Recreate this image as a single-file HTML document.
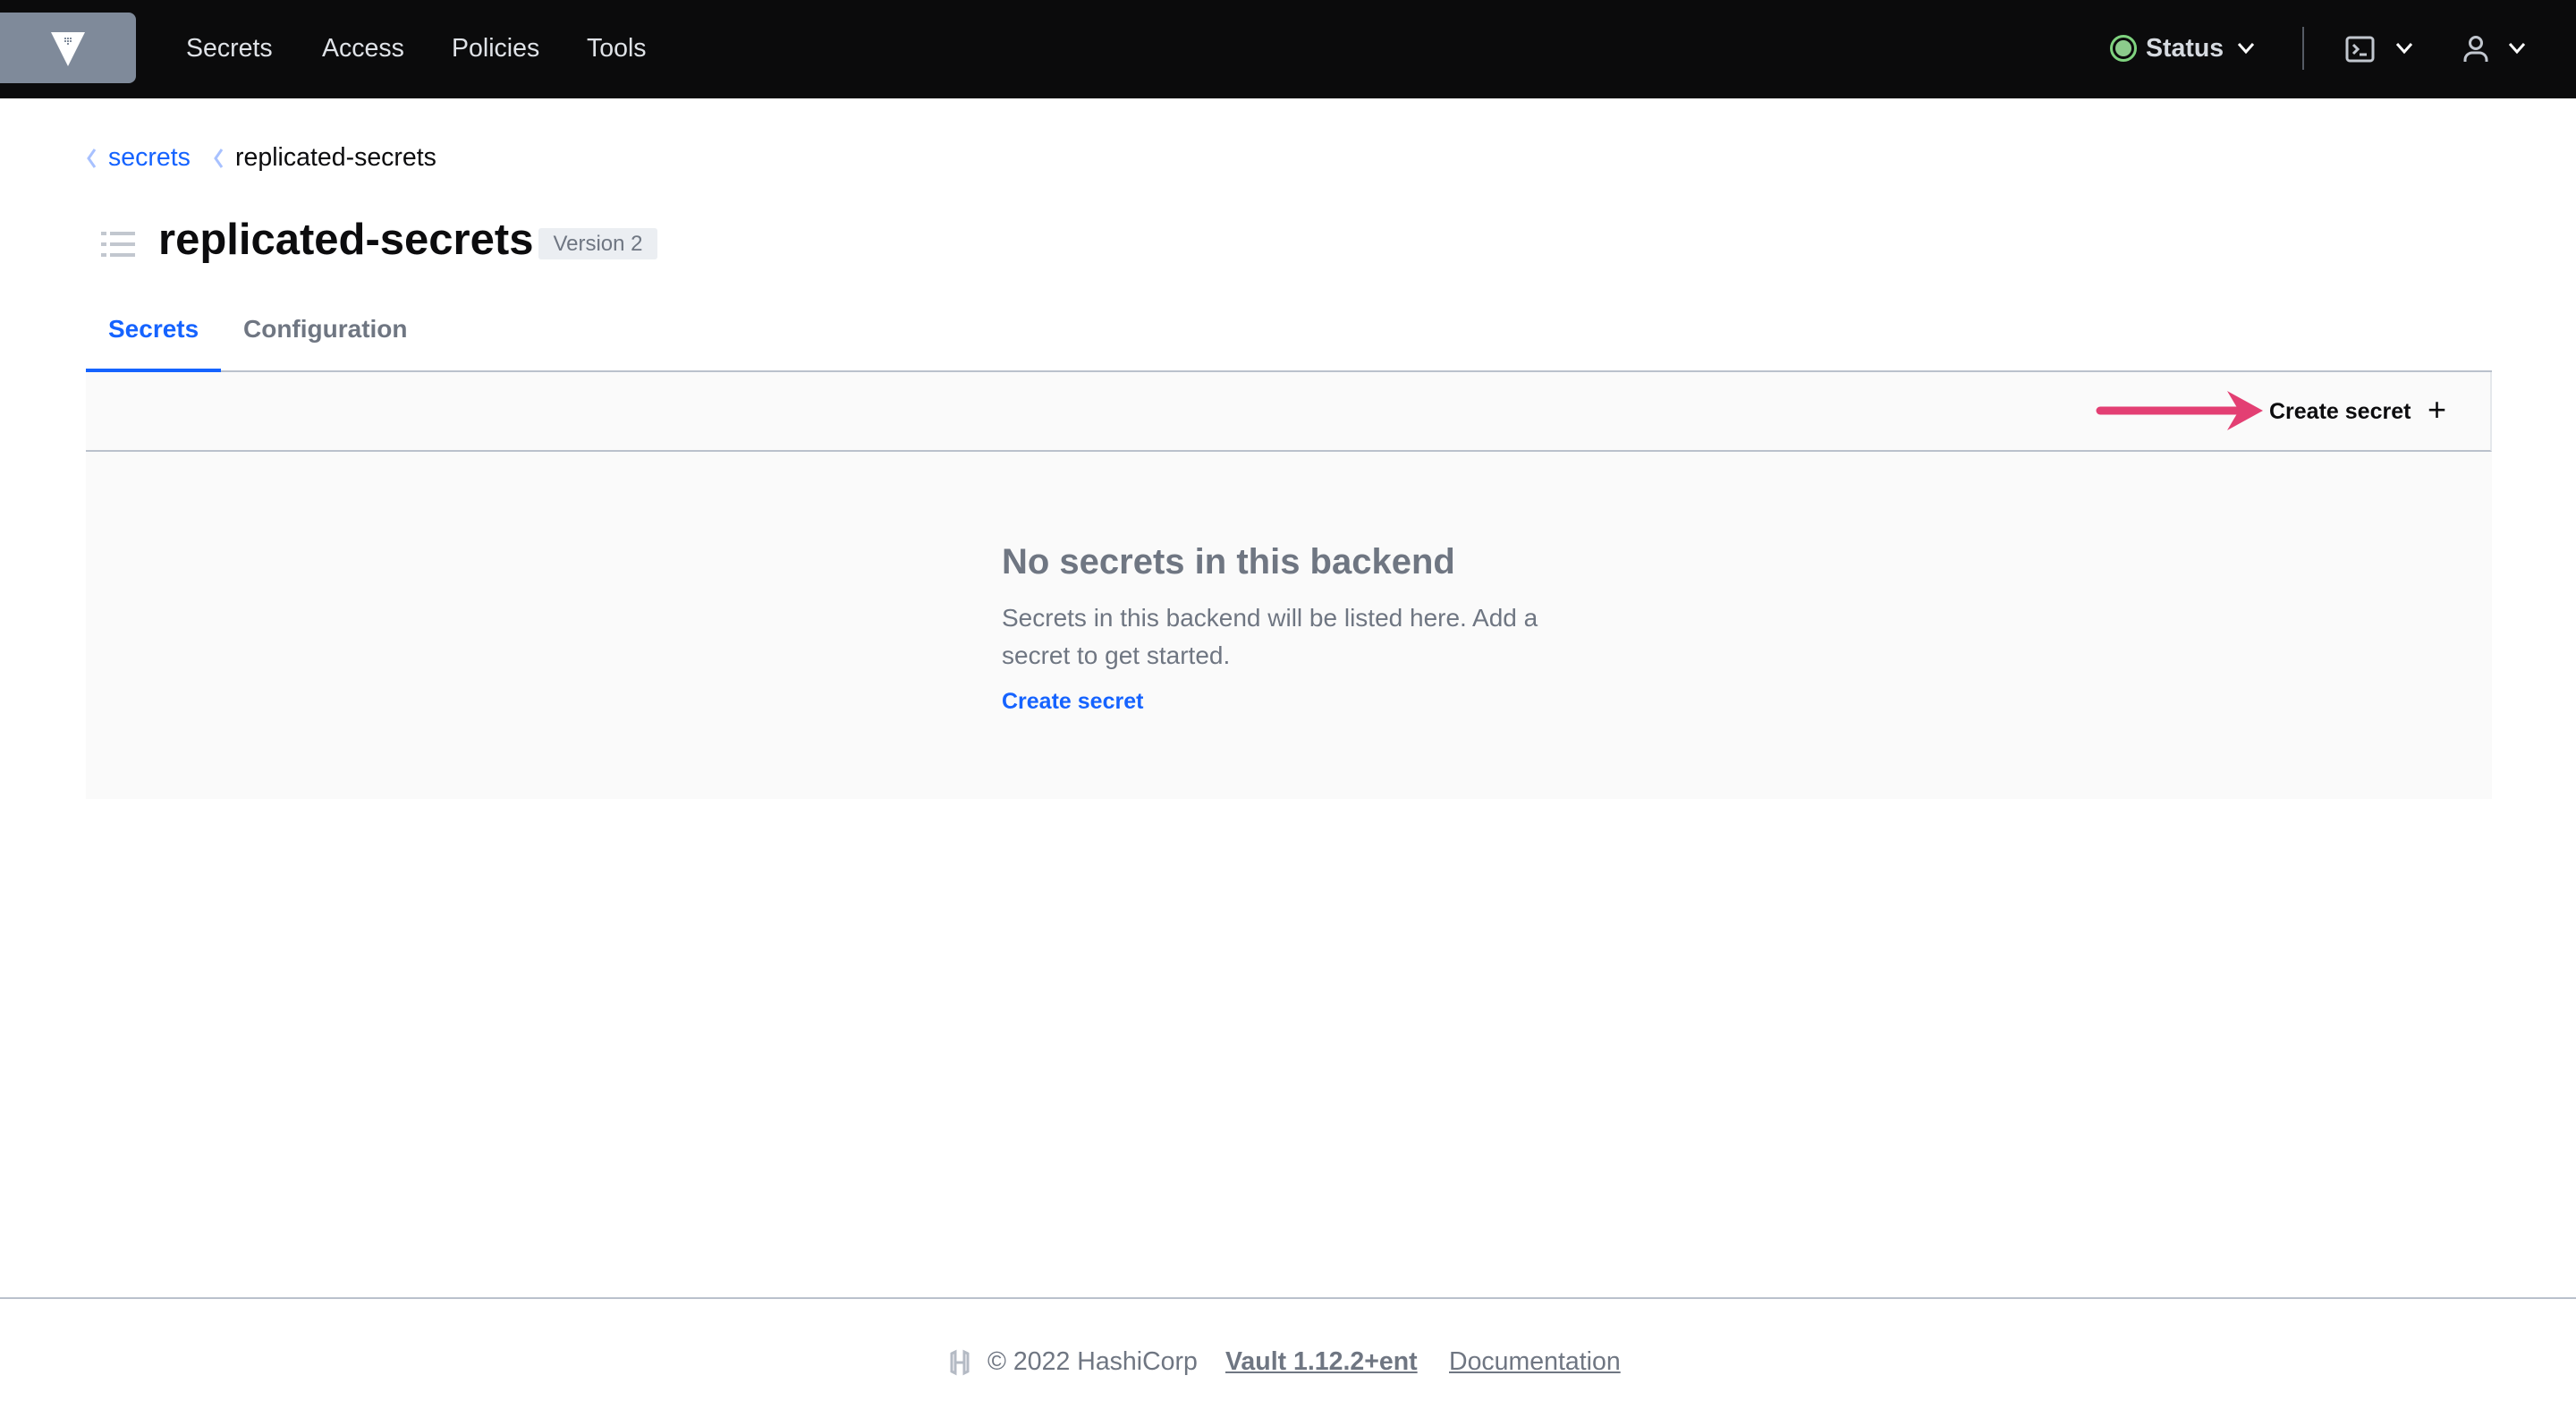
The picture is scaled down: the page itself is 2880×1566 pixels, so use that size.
<!DOCTYPE html>
<html><head><meta charset="utf-8"><style>
*{margin:0;padding:0;box-sizing:border-box}
body{width:2880px;height:1566px;background:#fff;font-family:"Liberation Sans",Arial,sans-serif;position:relative;overflow:hidden}
.a{position:absolute;white-space:nowrap}
.nav{position:absolute;left:0;top:0;width:2880px;height:110px;background:#0b0b0c}
.navt{color:#dfe2e7;font-size:28.5px;top:38px}
</style></head><body>
<div class="nav">
 <div class="a" style="left:0;top:14px;width:152px;height:79px;background:#7f8a9a;border-radius:0 8px 8px 0"></div>
 <svg class="a" style="left:55px;top:34px" width="42" height="42" viewBox="0 0 42 42"><polygon points="2,2 40,2 21,40" fill="#fff"/><g fill="#7f8a9a"><rect x="17" y="8" width="2" height="2"/><rect x="20" y="8" width="2" height="2"/><rect x="23" y="8" width="2" height="2"/><rect x="17" y="11" width="2" height="2"/><rect x="20" y="11" width="2" height="2"/><rect x="23" y="11" width="2" height="2"/><rect x="20" y="14" width="2" height="2"/></g></svg>
 <div class="a navt" style="left:208px">Secrets</div>
 <div class="a navt" style="left:360px">Access</div>
 <div class="a navt" style="left:505px">Policies</div>
 <div class="a navt" style="left:656px">Tools</div>
 <div class="a" style="left:2359px;top:39px;width:30px;height:30px;border-radius:50%;border:3px solid #7fd37f;background:#0b0b0c"><div style="margin:3px;width:18px;height:18px;border-radius:50%;background:#8ccc8c"></div></div>
 <div class="a navt" style="left:2399px;font-weight:bold;color:#d6dae0">Status</div>
 <svg class="a" style="left:2500px;top:46px" width="22" height="16"><polyline points="3,3 11,12 19,3" fill="none" stroke="#fff" stroke-width="3"/></svg>
 <div class="a" style="left:2574px;top:30px;width:2px;height:48px;background:#555b64"></div>
 <svg class="a" style="left:2622px;top:40px" width="34" height="30"><rect x="2" y="2" width="29" height="26" rx="3" fill="none" stroke="#c2c7cf" stroke-width="3"/><polyline points="9,10 14,15 9,20" fill="none" stroke="#c2c7cf" stroke-width="3"/><line x1="16" y1="21" x2="24" y2="21" stroke="#c2c7cf" stroke-width="3"/></svg>
 <svg class="a" style="left:2677px;top:46px" width="22" height="16"><polyline points="3,3 11,12 19,3" fill="none" stroke="#fff" stroke-width="3"/></svg>
 <svg class="a" style="left:2754px;top:39px" width="28" height="32"><circle cx="14" cy="9" r="6.5" fill="none" stroke="#c2c7cf" stroke-width="3"/><path d="M2,30 V28 A8,8 0 0 1 10,20 H18 A8,8 0 0 1 26,28 V30" fill="none" stroke="#c2c7cf" stroke-width="3"/></svg>
 <svg class="a" style="left:2803px;top:46px" width="22" height="16"><polyline points="3,3 11,12 19,3" fill="none" stroke="#fff" stroke-width="3"/></svg>
</div>

<svg class="a" style="left:95px;top:165px" width="14" height="24"><polyline points="11,2 4,12 11,22" fill="none" stroke="#a8c1ff" stroke-width="3"/></svg>
<div class="a" style="left:121px;top:160px;font-size:28.5px;color:#1563ff">secrets</div>
<svg class="a" style="left:237px;top:165px" width="14" height="24"><polyline points="11,2 4,12 11,22" fill="none" stroke="#a8c1ff" stroke-width="3"/></svg>
<div class="a" style="left:263px;top:160px;font-size:28.5px;color:#0c0c0e">replicated-secrets</div>

<svg class="a" style="left:113px;top:258px" width="40" height="30"><g fill="#c2c7cf"><rect x="0" y="1" width="6" height="4"/><rect x="10" y="1" width="28" height="4"/><rect x="0" y="13" width="6" height="4"/><rect x="10" y="13" width="28" height="4"/><rect x="0" y="25" width="6" height="4"/><rect x="10" y="25" width="28" height="4"/></g></svg>
<div class="a" style="left:177px;top:240px;font-size:49px;font-weight:bold;color:#0c0c0e">replicated-secrets</div>
<div class="a" style="left:602px;top:255px;width:133px;height:35px;background:#ebeef2;border-radius:3px;color:#6f7682;font-size:24px;text-align:center;line-height:35px">Version 2</div>

<div class="a" style="left:121px;top:352px;font-size:28px;color:#1563ff;font-weight:bold">Secrets</div>
<div class="a" style="left:272px;top:352px;font-size:28px;color:#6f7682;font-weight:bold">Configuration</div>
<div class="a" style="left:96px;top:414px;width:2690px;height:2px;background:#bac1cc"></div>
<div class="a" style="left:96px;top:412px;width:151px;height:4px;background:#1563ff"></div>

<div class="a" style="left:96px;top:416px;width:2690px;height:89px;background:#fafafa;border-right:2px solid #e5e8ec;border-bottom:2px solid #bac1cc"></div>
<svg class="a" style="left:2340px;top:434px" width="195" height="50"><line x1="8" y1="25" x2="160" y2="25" stroke="#e33f73" stroke-width="9" stroke-linecap="round"/><polygon points="150,3 190,25 150,47 163,25" fill="#e33f73"/></svg>
<div class="a" style="left:2537px;top:446px;font-size:25px;font-weight:bold;color:#0c0c0e">Create secret</div>
<div class="a" style="left:2714px;top:437px;font-size:36px;color:#0c0c0e">+</div>

<div class="a" style="left:96px;top:505px;width:2690px;height:388px;background:#fafafa"></div>
<div class="a" style="left:1120px;top:606px;font-size:40px;font-weight:bold;color:#6f7682">No secrets in this backend</div>
<div class="a" style="left:1120px;top:670px;font-size:28px;color:#6f7682;line-height:42px;white-space:normal;width:660px">Secrets in this backend will be listed here. Add a secret to get started.</div>
<div class="a" style="left:1120px;top:770px;font-size:25px;font-weight:bold;color:#1563ff">Create secret</div>

<div class="a" style="left:0;top:1450px;width:2880px;height:2px;background:#bac1cc"></div>
<svg class="a" style="left:1058px;top:1508px" width="30" height="30"><g fill="none" stroke="#b4bac4" stroke-width="3"><path d="M6,5 L10,3 V27 L6,25 Z"/><path d="M24,5 L20,3 V27 L24,25 Z"/><line x1="10" y1="15" x2="20" y2="15"/></g></svg>
<div class="a" style="left:1104px;top:1506px;font-size:28.5px;color:#6f7682">© 2022 HashiCorp</div>
<div class="a" style="left:1370px;top:1506px;font-size:28.5px;color:#6f7682;font-weight:bold;text-decoration:underline">Vault 1.12.2+ent</div>
<div class="a" style="left:1620px;top:1506px;font-size:28.5px;color:#6f7682;text-decoration:underline">Documentation</div>
</body></html>
